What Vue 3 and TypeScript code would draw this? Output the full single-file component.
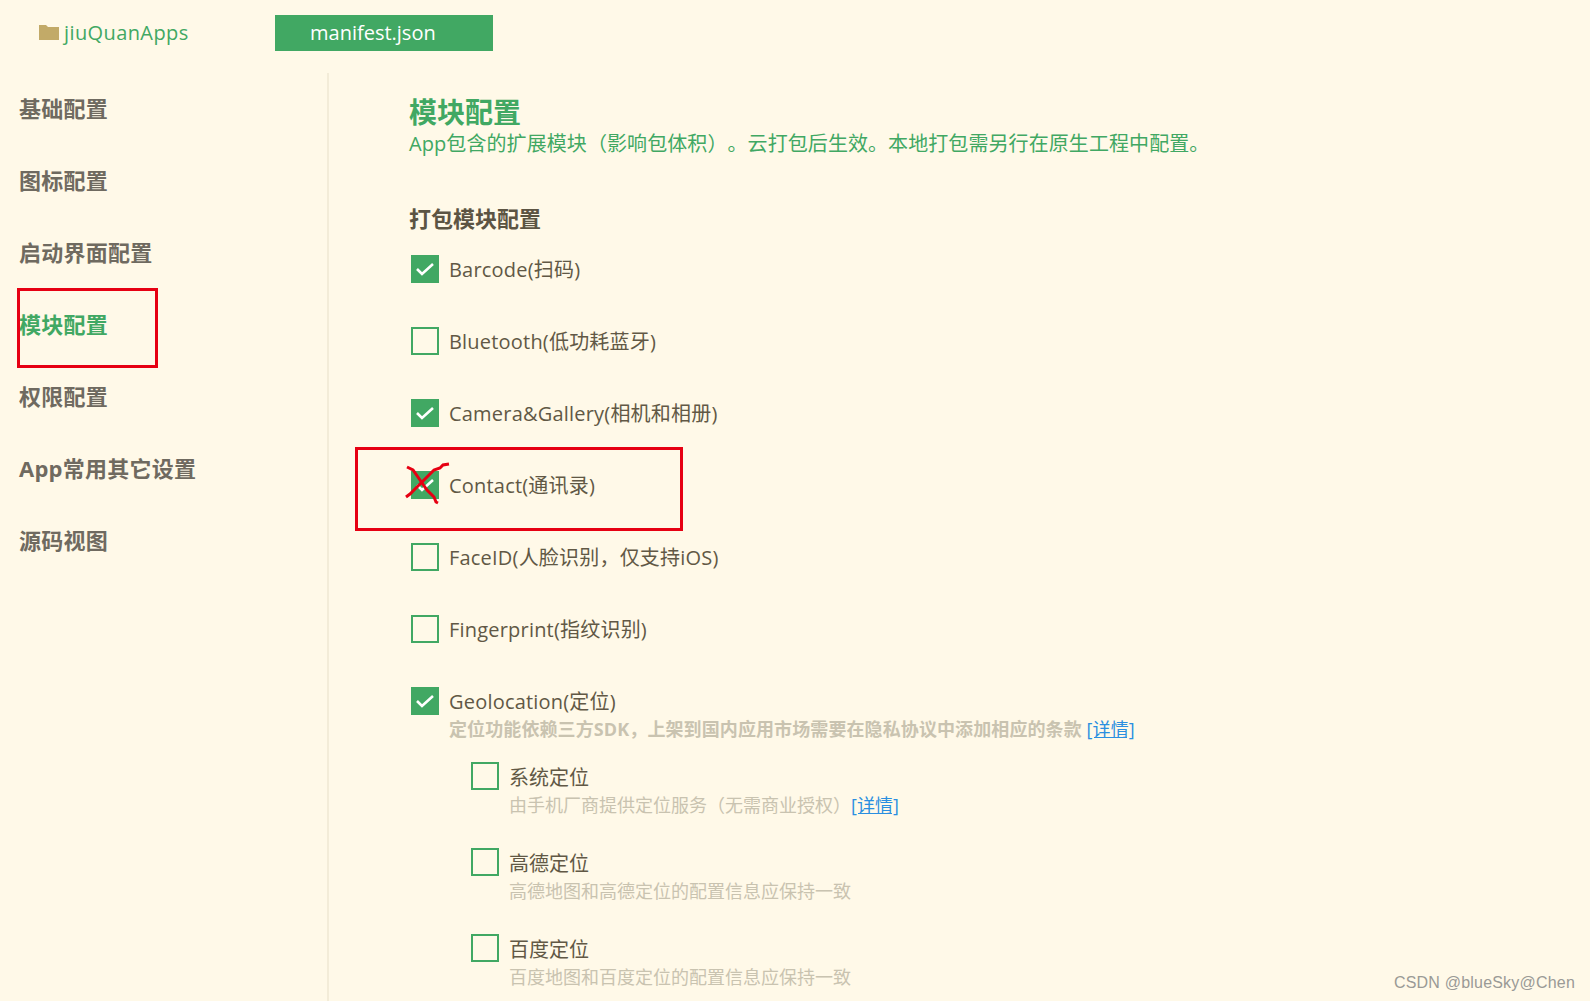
<template>
  <div class="page">
    <header class="top-bar">
      <div class="project">
        <svg class="folder" width="20" height="16" viewBox="0 0 20 16">
          <path d="M0 1h7l2 2h11v13H0z" fill="#c2aa68" />
        </svg>
        <span>jiuQuanApps</span>
      </div>
      <div class="tab">manifest.json</div>
    </header>

    <div class="body">
      <nav class="side">
        <a v-for="item in navItems" :key="item" class="nav-item" :class="{ active: item === current }">{{ item }}</a>
      </nav>

      <main class="content">
        <h1 class="title">模块配置</h1>
        <p class="subtitle">App包含的扩展模块（影响包体积）。云打包后生效。本地打包需另行在原生工程中配置。</p>
        <h2 class="section">打包模块配置</h2>

        <div v-for="mod in modules" :key="mod.label" class="row">
          <label class="check-line mod-line">
            <span class="box" :class="{ checked: mod.checked }">
              <svg v-if="mod.checked" width="18" height="14" viewBox="0 0 18 14">
                <path d="M1 7l5 5L17 2" fill="none" stroke="#fff" stroke-width="2.6" />
              </svg>
            </span>
            <span class="mod-text">{{ mod.label }}</span>
          </label>
          <p v-if="mod.note" class="geo-note">{{ mod.note }} <a class="more">[详情]</a></p>
        </div>

        <div v-for="sub in subModules" :key="sub.label" class="sub-row">
          <label class="check-line">
            <span class="box"></span>
            <span>{{ sub.label }}</span>
          </label>
          <p class="sub-note">{{ sub.note }}<a v-if="sub.more" class="more">[详情]</a></p>
        </div>
      </main>
    </div>

    <!-- hand drawn marks on top of the screenshot -->
    <div class="mark mark-nav"></div>
    <div class="mark mark-contact"></div>
    <svg class="scribble" width="50" height="48" viewBox="0 0 50 48">
      <path d="M5 6l6 3 7 10 7 10 7 7 2 5 2 1" fill="none" stroke="#e60012" stroke-width="3" />
      <path d="M47 3l-6 1-3 3-6 2-6 6-6 6-6 6-6 6-4 3" fill="none" stroke="#e60012" stroke-width="3" />
    </svg>

    <div class="watermark">CSDN @blueSky@Chen</div>
  </div>
</template>

<script setup lang="ts">
interface Mod {
  label: string
  checked: boolean
  note?: string
}

const current = '模块配置'
const navItems = ['基础配置', '图标配置', '启动界面配置', '模块配置', '权限配置', 'App常用其它设置', '源码视图']

const modules: Mod[] = [
  { label: 'Barcode(扫码)', checked: true },
  { label: 'Bluetooth(低功耗蓝牙)', checked: false },
  { label: 'Camera&Gallery(相机和相册)', checked: true },
  { label: 'Contact(通讯录)', checked: true },
  { label: 'FaceID(人脸识别，仅支持iOS)', checked: false },
  { label: 'Fingerprint(指纹识别)', checked: false },
  {
    label: 'Geolocation(定位)',
    checked: true,
    note: '定位功能依赖三方SDK，上架到国内应用市场需要在隐私协议中添加相应的条款'
  }
]

const subModules = [
  { label: '系统定位', note: '由手机厂商提供定位服务（无需商业授权）', more: true },
  { label: '高德定位', note: '高德地图和高德定位的配置信息应保持一致', more: false },
  { label: '百度定位', note: '百度地图和百度定位的配置信息应保持一致', more: false }
]
</script>

<style>
html,
body {
  background: #fff9e8;
}
</style>

<style scoped>
.page {
  position: relative;
  height: 1001px;
  overflow: hidden;
  background: #fff9e8;
  font-family: "Open Sans", "Noto Sans CJK SC", sans-serif;
  color: #615845;
  text-spacing-trim: space-all;
}
.top-bar {
  display: flex;
  align-items: center;
  height: 73px;
  box-sizing: border-box;
}
.project {
  display: flex;
  align-items: center;
  gap: 5px;
  width: 275px;
  margin-top: -9px;
  padding-left: 39px;
  box-sizing: border-box;
  color: #41a863;
  font-size: 20px;
  letter-spacing: 0.4px;
}
.tab {
  width: 218px;
  height: 36px;
  margin-top: -7px;
  padding-left: 35px;
  box-sizing: border-box;
  background: #41a863;
  color: #fff;
  font-size: 20px;
  line-height: 35px;
}
.body {
  display: flex;
}
.side {
  display: flex;
  flex-direction: column;
  width: 329px;
  height: 928px;
  padding: 1px 0 0 19px;
  box-sizing: border-box;
  border-right: 2px solid #f3ecd8;
}
.nav-item {
  height: 72px;
  line-height: 68px;
  font-size: 22px;
  font-weight: 700;
  letter-spacing: 0.25px;
  color: #6f6a60;
}
.nav-item.active {
  color: #41a863;
}
.content {
  flex: 1;
  padding: 22px 0 0 80px;
}
.title {
  margin: 0;
  font-size: 28px;
  line-height: 35px;
  font-weight: 700;
  color: #41a863;
}
.subtitle {
  margin: 0;
  font-size: 20px;
  line-height: 28px;
  letter-spacing: 0.08px;
  color: #41a863;
}
.section {
  margin: 43px 0 0;
  font-size: 22px;
  line-height: 34px;
  font-weight: 700;
  color: #5c5443;
}
.row {
  min-height: 72px;
  padding: 20px 0 0 2px;
  box-sizing: border-box;
}
.row:last-of-type {
  padding-bottom: 0;
}
.check-line {
  display: flex;
  align-items: center;
  gap: 10px;
  height: 28px;
  font-size: 20px;
}
.mod-line {
  letter-spacing: 0.2px;
}
.mod-text {
  margin-top: -2px;
}
.box {
  display: flex;
  align-items: center;
  justify-content: center;
  flex: none;
  width: 28px;
  height: 28px;
  box-sizing: border-box;
  border: 2px solid #41a863;
}
.box.checked {
  background: #41a863;
}
.geo-note {
  margin: 0 0 0 38px;
  font-size: 18px;
  line-height: 28px;
  font-weight: 700;
  letter-spacing: 0.1px;
  color: #c9c3b0;
}
.sub-row {
  height: 86px;
  padding: 19px 0 0 62px;
  box-sizing: border-box;
}
.sub-note {
  margin: 1px 0 0 38px;
  font-size: 18px;
  line-height: 28px;
  color: #c9c3b0;
}
.more {
  color: #2a8fe0;
  text-decoration: underline;
  font-weight: 400;
}
.mark {
  position: absolute;
  border: 3px solid #e60012;
  box-sizing: border-box;
}
.mark-nav {
  left: 17px;
  top: 288px;
  width: 141px;
  height: 80px;
}
.mark-contact {
  left: 355px;
  top: 447px;
  width: 328px;
  height: 84px;
}
.scribble {
  position: absolute;
  left: 402px;
  top: 461px;
}
.watermark {
  position: absolute;
  right: 15px;
  bottom: 9px;
  font-family: "Liberation Sans", sans-serif;
  font-size: 16px;
  color: #9a9a96;
  letter-spacing: 0.2px;
}
</style>
